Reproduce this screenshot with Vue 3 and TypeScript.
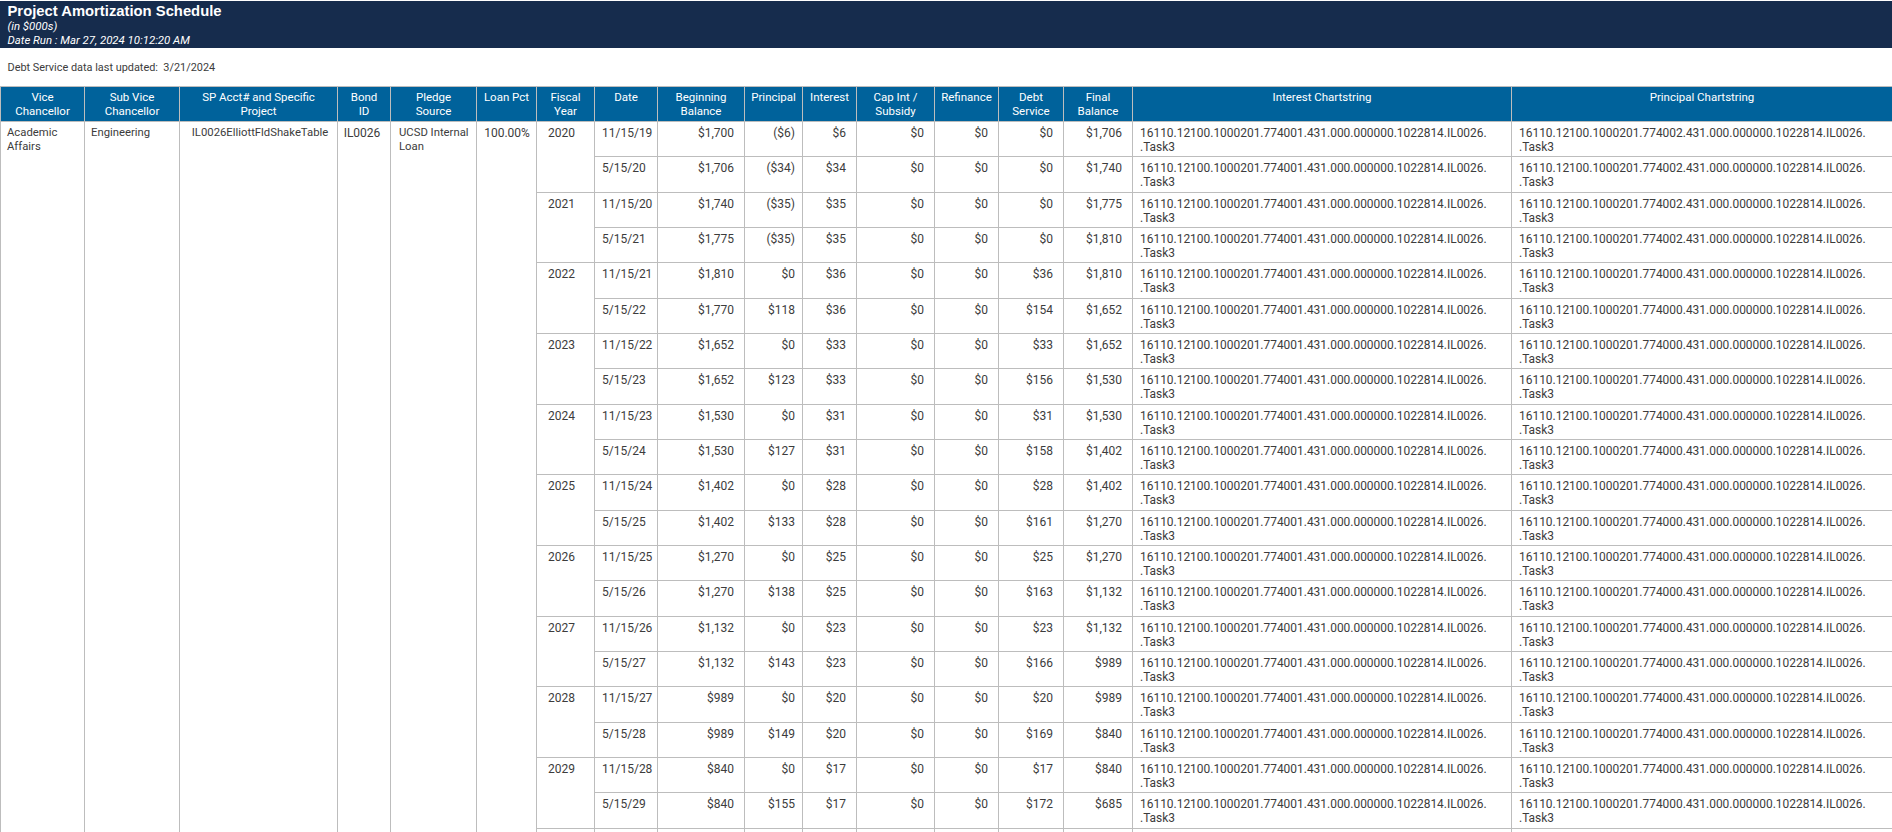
<script setup lang="ts">
interface Row { date: string; begin: number; principal: number; interest: number; service: number; final: number; acct: string }
interface Year { fy: number; rows: Row[] }

const columns = [
  { label: 'Vice Chancellor', width: 84, wrap: false },
  { label: 'Sub Vice Chancellor', width: 95, wrap: false },
  { label: 'SP Acct# and Specific Project', width: 158, wrap: false },
  { label: 'Bond ID', width: 53, wrap: true },
  { label: 'Pledge Source', width: 86, wrap: true },
  { label: 'Loan Pct', width: 60, wrap: false },
  { label: 'Fiscal Year', width: 58, wrap: false },
  { label: 'Date', width: 63, wrap: false },
  { label: 'Beginning Balance', width: 87, wrap: false },
  { label: 'Principal', width: 58, wrap: false },
  { label: 'Interest', width: 54, wrap: false },
  { label: 'Cap Int / Subsidy', width: 78, wrap: false },
  { label: 'Refinance', width: 64, wrap: false },
  { label: 'Debt Service', width: 65, wrap: false },
  { label: 'Final Balance', width: 69, wrap: false },
  { label: 'Interest Chartstring', width: 379, wrap: false },
  { label: 'Principal Chartstring', width: 381, wrap: false }
]

const raw: [number, string, number, number, number, number, number, string, number, number, number, number, number][] = [
  [2020, '11/15/19', 1700, -6, 6, 0, 1706, '5/15/20', 1706, -34, 34, 0, 1740],
  [2021, '11/15/20', 1740, -35, 35, 0, 1775, '5/15/21', 1775, -35, 35, 0, 1810],
  [2022, '11/15/21', 1810, 0, 36, 36, 1810, '5/15/22', 1770, 118, 36, 154, 1652],
  [2023, '11/15/22', 1652, 0, 33, 33, 1652, '5/15/23', 1652, 123, 33, 156, 1530],
  [2024, '11/15/23', 1530, 0, 31, 31, 1530, '5/15/24', 1530, 127, 31, 158, 1402],
  [2025, '11/15/24', 1402, 0, 28, 28, 1402, '5/15/25', 1402, 133, 28, 161, 1270],
  [2026, '11/15/25', 1270, 0, 25, 25, 1270, '5/15/26', 1270, 138, 25, 163, 1132],
  [2027, '11/15/26', 1132, 0, 23, 23, 1132, '5/15/27', 1132, 143, 23, 166, 989],
  [2028, '11/15/27', 989, 0, 20, 20, 989, '5/15/28', 989, 149, 20, 169, 840],
  [2029, '11/15/28', 840, 0, 17, 17, 840, '5/15/29', 840, 155, 17, 172, 685]
]

const years: Year[] = raw.map((r) => {
  const acct = r[0] < 2022 ? '774002' : '774000'
  return {
    fy: r[0],
    rows: [
      { date: r[1], begin: r[2], principal: r[3], interest: r[4], service: r[5], final: r[6], acct },
      { date: r[7], begin: r[8], principal: r[9], interest: r[10], service: r[11], final: r[12], acct }
    ]
  }
})

const totalRows = years.length * 2 + 1

function money(n: number): string {
  const s = '$' + Math.abs(n).toLocaleString('en-US')
  return n < 0 ? `(${s})` : s
}

function chart(acct: string): string {
  return `16110.12100.1000201.${acct}.431.000.000000.1022814.IL0026.`
}
</script>

<template>
  <div class="page">
    <header class="banner">
      <div class="title">Project Amortization Schedule</div>
      <div class="sub">(in $000s)</div>
      <div class="sub">Date Run : Mar 27, 2024 10:12:20 AM</div>
    </header>
    <p class="updated">Debt Service data last updated:&nbsp; 3/21/2024</p>
    <table class="schedule">
      <colgroup>
        <col v-for="c in columns" :key="c.label" :style="{ width: c.width + 'px' }" />
      </colgroup>
      <thead>
        <tr>
          <th v-for="c in columns" :key="c.label" :class="{ wrap: c.wrap }">{{ c.label }}</th>
        </tr>
      </thead>
      <tbody>
        <template v-for="(y, yi) in years" :key="y.fy">
          <tr v-for="(r, ri) in y.rows" :key="r.date">
            <template v-if="yi === 0 && ri === 0">
              <td :rowspan="totalRows" class="t">Academic Affairs</td>
              <td :rowspan="totalRows" class="t">Engineering</td>
              <td :rowspan="totalRows" class="t sp">IL0026ElliottFldShakeTable</td>
              <td :rowspan="totalRows" class="c bond">IL0026</td>
              <td :rowspan="totalRows" class="t pledge">UCSD Internal Loan</td>
              <td :rowspan="totalRows" class="c">100.00%</td>
            </template>
            <td v-if="ri === 0" rowspan="2" class="fy">{{ y.fy }}</td>
            <td class="nw">{{ r.date }}</td>
            <td class="r">{{ money(r.begin) }}</td>
            <td class="r narrow">{{ money(r.principal) }}</td>
            <td class="r">{{ money(r.interest) }}</td>
            <td class="r">$0</td>
            <td class="r">$0</td>
            <td class="r">{{ money(r.service) }}</td>
            <td class="r">{{ money(r.final) }}</td>
            <td class="cs">{{ chart('774001') }}<br />.Task3</td>
            <td class="cs">{{ chart(r.acct) }}<br />.Task3</td>
          </tr>
        </template>
        <tr class="tail">
          <td></td><td></td><td></td><td></td><td></td><td></td><td></td><td></td><td></td><td></td><td></td>
        </tr>
      </tbody>
    </table>
  </div>
</template>

<style>
html, body { margin: 0; background: #fff; overflow: hidden; }
</style>

<style scoped>
.page {
  width: 1892px;
  height: 832px;
  overflow: hidden;
  font-family: Roboto, "Noto Sans", sans-serif;
  font-size: 12px;
  color: #3c3c3c;
}
.banner {
  margin-top: 1px;
  height: 47px;
  box-sizing: border-box;
  padding: 2px 8px 0 7.5px;
  background: #162c4d;
  color: #fff;
}
.title {
  font-family: "Liberation Sans", Arial, sans-serif;
  font-weight: 700;
  font-size: 14.8px;
  line-height: 17px;
}
.sub {
  font-style: italic;
  font-size: 11.4px;
  line-height: 13.5px;
}
.updated {
  margin: 0;
  height: 38px;
  padding: 13px 0 0 7.5px;
  box-sizing: border-box;
  font-size: 10.9px;
  line-height: 14px;
}
.schedule {
  table-layout: fixed;
  width: 1892px;
  border-collapse: collapse;
}
th, td {
  border: 1px solid #bdbdbd;
  vertical-align: top;
  padding: 4px 5px 2px 6px;
  line-height: 14px;
  font-weight: 400;
}
th {
  height: 35px;
  box-sizing: border-box;
  padding: 3px 4px;
  background: #00629b;
  color: #fff;
  text-align: center;
  font-size: 11.5px;
  font-weight: 400;
}
th.wrap { padding: 3px 12px; }
td { height: 35.33px; box-sizing: border-box; }
.t { font-size: 11.3px; }
.c { text-align: center; }
.bond { padding-left: 4px; padding-right: 8px; }
.sp { text-align: center; padding-left: 10px; padding-right: 7px; white-space: nowrap; }
.pledge { padding-left: 8px; padding-right: 2px; }
.fy { padding-left: 11px; }
.nw { white-space: nowrap; padding-left: 7px; }
.r { text-align: right; padding-right: 10px; }
.narrow { padding-right: 7px; }
.cs { font-size: 11.95px; white-space: nowrap; padding-left: 7px; }
</style>
